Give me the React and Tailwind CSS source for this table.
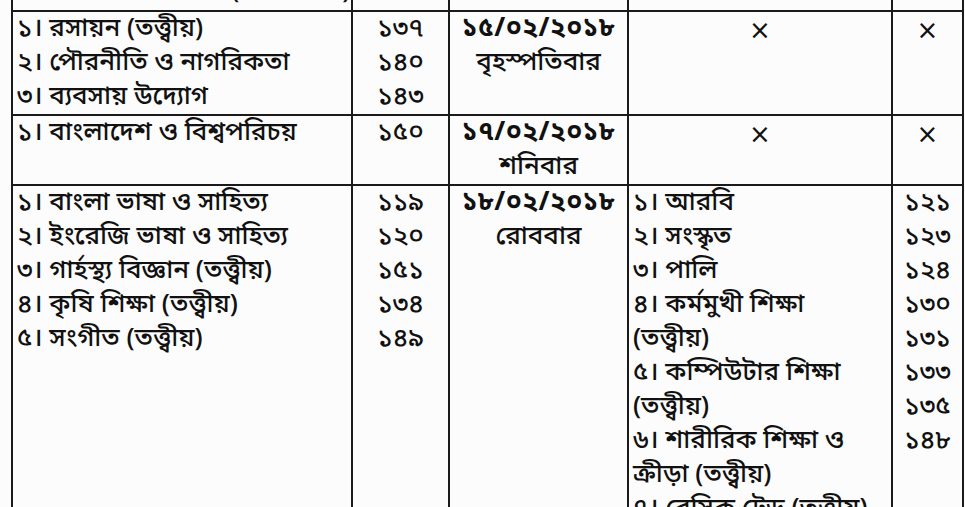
import React from "react";

const bn = {
  fontFamily:
    '"Noto Sans Bengali", "Noto Serif Bengali", "Lohit Bengali", "Mukti", "FreeSans", "Noto Sans", sans-serif',
};

const row1 = [
  ["১। রসায়ন (তত্ত্বীয়)", "১৩৭"],
  ["২। পৌরনীতি ও নাগরিকতা", "১৪০"],
  ["৩। ব্যবসায় উদ্যোগ", "১৪৩"],
];

const row3Left = [
  ["১। বাংলা ভাষা ও সাহিত্য", "১১৯"],
  ["২। ইংরেজি ভাষা ও সাহিত্য", "১২০"],
  ["৩। গার্হস্থ্য বিজ্ঞান (তত্ত্বীয়)", "১৫১"],
  ["৪। কৃষি শিক্ষা (তত্ত্বীয়)", "১৩৪"],
  ["৫। সংগীত (তত্ত্বীয়)", "১৪৯"],
];

const row3Right = [
  "১। আরবি",
  "২। সংস্কৃত",
  "৩। পালি",
  "৪। কর্মমুখী শিক্ষা",
  "(তত্ত্বীয়)",
  "৫। কম্পিউটার শিক্ষা",
  "(তত্ত্বীয়)",
  "৬। শারীরিক শিক্ষা ও",
  "ক্রীড়া (তত্ত্বীয়)",
  "৭। বেসিক ট্রেড (তত্ত্বীয়)",
];

const row3RightCodes = ["১২১", "১২৩", "১২৪", "১৩০", "১৩১", "১৩৩", "১৩৫", "১৪৮"];

function Lines({ items, className = "" }) {
  return (
    <div className={className}>
      {items.map((t, i) => (
        <div key={i} className="h-[34px] leading-[36px] whitespace-nowrap">
          {t}
        </div>
      ))}
    </div>
  );
}

function DateCell({ date, day }) {
  return (
    <div className="text-center">
      <div className="h-[34px] leading-[36px] font-bold text-[26px] tracking-[0.5px]">{date}</div>
      <div className="h-[34px] leading-[36px]">{day}</div>
    </div>
  );
}

function Cross() {
  return (
    <div className="h-[34px] leading-[36px] text-center font-['DejaVu_Sans'] text-[26px] font-normal">
      ×
    </div>
  );
}

const cell = "border-2 border-[#1a1a1a] align-top p-0";

export default function App() {
  return (
    <div
      className="w-[965px] h-[507px] overflow-hidden bg-[#fcfcfc] pl-[11px] text-[26px] font-medium text-[#111]"
      style={bn}
    >
      <table className="table-fixed border-collapse mt-[-24px] w-[951px]">
        <colgroup>
          <col className="w-[340px]" />
          <col className="w-[97px]" />
          <col className="w-[179px]" />
          <col className="w-[264px]" />
          <col className="w-[71px]" />
        </colgroup>
        <tbody>
          <tr className="h-[34px]">
            <td className={cell + " pl-[4px]"}>
              <div className="leading-[28px] whitespace-nowrap">৩। কম্পিউটার শিক্ষা (ব্যবহারিক)</div>
            </td>
            <td className={cell}></td>
            <td className={cell}></td>
            <td className={cell}></td>
            <td className={cell}></td>
          </tr>
          <tr>
            <td className={cell + " pl-[4px]"}>
              <Lines items={row1.map((r) => r[0])} />
            </td>
            <td className={cell}>
              <Lines items={row1.map((r) => r[1])} className="text-center" />
            </td>
            <td className={cell}>
              <DateCell date="১৫/০২/২০১৮" day="বৃহস্পতিবার" />
            </td>
            <td className={cell}>
              <Cross />
            </td>
            <td className={cell}>
              <Cross />
            </td>
          </tr>
          <tr>
            <td className={cell + " pl-[4px] pb-[3px]"}>
              <Lines items={["১। বাংলাদেশ ও বিশ্বপরিচয়"]} />
            </td>
            <td className={cell}>
              <Lines items={["১৫০"]} className="text-center" />
            </td>
            <td className={cell}>
              <DateCell date="১৭/০২/২০১৮" day="শনিবার" />
            </td>
            <td className={cell}>
              <Cross />
            </td>
            <td className={cell}>
              <Cross />
            </td>
          </tr>
          <tr className="h-[360px]">
            <td className={cell + " pl-[4px]"}>
              <Lines items={row3Left.map((r) => r[0])} />
            </td>
            <td className={cell}>
              <Lines items={row3Left.map((r) => r[1])} className="text-center" />
            </td>
            <td className={cell}>
              <DateCell date="১৮/০২/২০১৮" day="রোববার" />
            </td>
            <td className={cell + " pl-[4px]"}>
              <Lines items={row3Right} />
            </td>
            <td className={cell}>
              <Lines items={row3RightCodes} className="text-center" />
            </td>
          </tr>
        </tbody>
      </table>
    </div>
  );
}
